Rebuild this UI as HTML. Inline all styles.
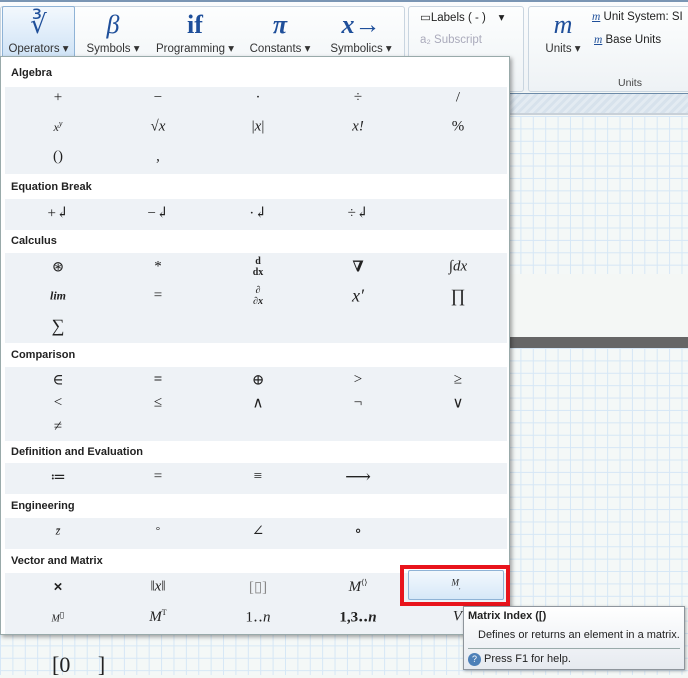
<!DOCTYPE html>
<html><head><meta charset="utf-8"><style>
*{margin:0;padding:0;box-sizing:border-box}
body{width:688px;height:675px;overflow:hidden;position:relative;background:#f4f7f5;font-family:"Liberation Sans",sans-serif;font-size:12px;color:#222}
.abs{position:absolute}
.grid{position:absolute;background-color:#f4f8f7;background-image:linear-gradient(#d6e7f6 1px,transparent 1px),linear-gradient(90deg,#d6e7f6 1px,transparent 1px);background-size:12.4px 12.4px}
.ribbon{position:absolute;left:0;top:0;width:688px;height:92px;background:linear-gradient(#fbfcfd,#eef2f5);border-top:2px solid #7a96b4}
.grp{position:absolute;top:4px;height:86px;border:1px solid #c9d5e0;border-radius:3px;background:linear-gradient(#fdfefe,#eef2f5)}
.btn{position:absolute;top:8px;text-align:center;color:#333}
.btn .ic{font-family:"Liberation Serif",serif;font-size:26px;color:#1f4f9a;font-style:italic;height:30px;line-height:30px}
.btn .lb{font-size:11.5px;margin-top:1px}
.menu{position:absolute;left:0;top:56px;width:510px;height:579px;background:#fff;border:1px solid #9aa;box-shadow:2px 2px 4px rgba(0,0,0,.35)}
.h{position:absolute;left:4px;width:502px;background:#fff;font-weight:bold;font-size:11px;padding-left:6px}
.a{position:absolute;left:4px;width:502px;background:#eef2f6}
.s{position:absolute;width:100px;text-align:center;font-family:"Liberation Serif","DejaVu Serif",serif;font-size:15px;color:#222;transform:translateY(-50%)}
</style></head><body>
<div class="grid" style="left:0;top:116px;width:688px;height:158px"></div>
<div class="abs" style="left:0;top:337px;width:688px;height:11px;background:#666"></div>
<div class="grid" style="left:0;top:348px;width:688px;height:327px"></div>
<div class="abs" style="left:0;top:93px;width:688px;height:22px;background:repeating-linear-gradient(135deg,#d7e2ec 0 3px,#e3ebf2 3px 6px);border-top:1px solid #6c8aa8;border-bottom:2px solid #c8d0d8"></div>
<div class="ribbon">
 <div class="grp" style="left:0;width:405px"></div>
 <div class="grp" style="left:408px;width:116px"></div>
 <div class="grp" style="left:528px;width:170px"></div>
 <div class="abs" style="left:2px;top:4px;width:73px;height:52px;border:1px solid #8fb3d6;border-radius:2px;background:linear-gradient(#f3f8fd,#cfe3f6)"></div>
 <div class="btn" style="left:2px;width:73px"><div class="ic" style="font-style:normal">∛</div><div class="lb">Operators ▾</div></div>
 <div class="btn" style="left:80px;width:66px"><div class="ic">β</div><div class="lb">Symbols ▾</div></div>
 <div class="btn" style="left:150px;width:90px"><div class="ic" style="font-style:normal;font-weight:bold">if</div><div class="lb">Programming ▾</div></div>
 <div class="btn" style="left:245px;width:70px"><div class="ic" style="font-weight:bold">π</div><div class="lb">Constants ▾</div></div>
 <div class="btn" style="left:322px;width:78px"><div class="ic" style="font-weight:bold">x→</div><div class="lb">Symbolics ▾</div></div>
 <div class="abs" style="left:420px;top:8px;font-size:11.5px">▭Labels ( - ) &nbsp;&nbsp;&nbsp;▾</div>
 <div class="abs" style="left:420px;top:32px;font-size:11.5px;color:#aab">a₂ Subscript</div>
 <div class="btn" style="left:538px;width:50px"><div class="ic">m</div><div class="lb">Units ▾</div></div>
 <div class="abs" style="left:592px;top:9px;font-size:11.5px"><i style="font-family:'Liberation Serif';color:#1f4f9a;text-decoration:underline">m</i> Unit System: SI</div>
 <div class="abs" style="left:594px;top:32px;font-size:11.5px"><i style="font-family:'Liberation Serif';color:#1f4f9a;text-decoration:underline">m</i> Base Units</div>
 <div class="abs" style="left:600px;top:75px;font-size:10.5px;color:#444;width:60px;text-align:center">Units</div>
</div>
<div class="menu">
 <div class="h" style="top:2px;height:28px;line-height:28px">Algebra</div>
 <div class="a" style="top:30px;height:87px"></div>
 <div class="h" style="top:118px;height:24px;line-height:24px">Equation Break</div>
 <div class="a" style="top:142px;height:31px"></div>
 <div class="h" style="top:173px;height:23px;line-height:23px">Calculus</div>
 <div class="a" style="top:196px;height:90px"></div>
 <div class="h" style="top:286px;height:24px;line-height:24px">Comparison</div>
 <div class="a" style="top:310px;height:74px"></div>
 <div class="h" style="top:384px;height:22px;line-height:22px">Definition and Evaluation</div>
 <div class="a" style="top:406px;height:31px"></div>
 <div class="h" style="top:437px;height:24px;line-height:24px">Engineering</div>
 <div class="a" style="top:461px;height:31px"></div>
 <div class="h" style="top:492px;height:24px;line-height:24px">Vector and Matrix</div>
 <div class="a" style="top:516px;height:61px"></div>
</div>
<div class="abs" style="left:408px;top:570px;width:96px;height:30px;border:1px solid #8fb3d6;border-radius:2px;background:linear-gradient(#f3f8fd,#d6e8f8)"></div>
<div class="abs" style="left:400px;top:565px;width:110px;height:41px;border:4px solid #e8141c"></div>
<div class="s" style="left:8px;top:98px">+</div><div class="s" style="left:108px;top:98px">−</div><div class="s" style="left:208px;top:98px">·</div><div class="s" style="left:308px;top:98px">÷</div><div class="s" style="left:408px;top:98px">/</div>
<div class="s" style="left:8px;top:127px;font-style:italic;font-size:12px">x<sup style="font-size:8px">y</sup></div><div class="s" style="left:108px;top:127px">√<i>x</i></div><div class="s" style="left:208px;top:127px">|<i>x</i>|</div><div class="s" style="left:308px;top:127px"><i>x!</i></div><div class="s" style="left:408px;top:127px">%</div>
<div class="s" style="left:8px;top:157px">()</div><div class="s" style="left:108px;top:157px">,</div>
<div class="s" style="left:8px;top:213px">+↲</div><div class="s" style="left:108px;top:213px">−↲</div><div class="s" style="left:208px;top:213px">·↲</div><div class="s" style="left:308px;top:213px">÷↲</div>
<div class="s" style="left:8px;top:267px">⊛</div><div class="s" style="left:108px;top:267px">*</div><div class="s" style="left:208px;top:267px;font-size:10px;line-height:11px;font-weight:bold">d<br>dx</div><div class="s" style="left:308px;top:267px;font-weight:bold">∇</div><div class="s" style="left:408px;top:267px"><i>∫dx</i></div>
<div class="s" style="left:8px;top:296px;font-style:italic;font-weight:bold;font-size:12px">lim</div><div class="s" style="left:108px;top:296px">=</div><div class="s" style="left:208px;top:296px;font-size:10px;line-height:11px;font-weight:bold;font-style:italic">∂<br>∂x</div><div class="s" style="left:308px;top:296px;font-size:18px;font-style:italic">x′</div><div class="s" style="left:408px;top:296px;font-size:18px">∏</div>
<div class="s" style="left:8px;top:326px;font-size:18px">∑</div>
<div class="s" style="left:8px;top:380px">∈</div><div class="s" style="left:108px;top:380px;font-weight:bold">=</div><div class="s" style="left:208px;top:380px">⊕</div><div class="s" style="left:308px;top:380px">&gt;</div><div class="s" style="left:408px;top:380px">≥</div>
<div class="s" style="left:8px;top:403px">&lt;</div><div class="s" style="left:108px;top:403px">≤</div><div class="s" style="left:208px;top:403px">∧</div><div class="s" style="left:308px;top:403px">¬</div><div class="s" style="left:408px;top:403px">∨</div>
<div class="s" style="left:8px;top:427px">≠</div>
<div class="s" style="left:8px;top:477px">≔</div><div class="s" style="left:108px;top:477px">=</div><div class="s" style="left:208px;top:477px">≡</div><div class="s" style="left:308px;top:477px;font-size:18px">⟶</div>
<div class="s" style="left:8px;top:531px;font-style:italic;font-size:12px">z̄</div><div class="s" style="left:108px;top:531px;font-size:11px">°</div><div class="s" style="left:208px;top:531px">∠</div><div class="s" style="left:308px;top:531px">∘</div>
<div class="s" style="left:8px;top:587px;font-weight:bold;font-family:'Liberation Sans'">×</div><div class="s" style="left:108px;top:587px">‖<i>x</i>‖</div><div class="s" style="left:208px;top:587px;color:#888">[▯]</div><div class="s" style="left:308px;top:587px"><i>M</i><sup style="font-size:8px">⟨⟩</sup></div><div class="s" style="left:406px;top:584px;font-size:9px"><i>M</i><sub style="font-size:6px">,</sub></div>
<div class="s" style="left:8px;top:617px;font-size:10px"><i>M</i><sup>▯</sup></div><div class="s" style="left:108px;top:617px"><i>M</i><sup style="font-size:8px">T</sup></div><div class="s" style="left:208px;top:617px">1‥<i>n</i></div><div class="s" style="left:308px;top:617px;font-weight:bold">1,3‥<i>n</i></div><div class="s" style="left:408px;top:617px;text-align:right;padding-right:46px"><i>V</i></div>
<div class="abs" style="left:463px;top:606px;width:222px;height:64px;background:linear-gradient(#fff,#e6eaf0);border:1px solid #8e959c;box-shadow:1px 1px 3px rgba(0,0,0,.3);font-size:11px">
 <div style="position:absolute;left:4px;top:3px;font-weight:bold">Matrix Index ([)</div>
 <div style="position:absolute;left:14px;top:22px">Defines or returns an element in a matrix.</div>
 <div style="position:absolute;left:4px;top:41px;width:212px;border-top:1px solid #9aa"></div>
 <div style="position:absolute;left:4px;top:46px"><span style="display:inline-block;width:13px;height:13px;border-radius:50%;background:#4d80b8;color:#fff;font-size:9px;text-align:center;line-height:13px">?</span> Press F1 for help.</div>
</div>
<div class="abs" style="left:52px;top:652px;font-family:'Liberation Serif';font-size:22px">[0 &nbsp;&nbsp;&nbsp;&nbsp;]</div>
</body></html>
